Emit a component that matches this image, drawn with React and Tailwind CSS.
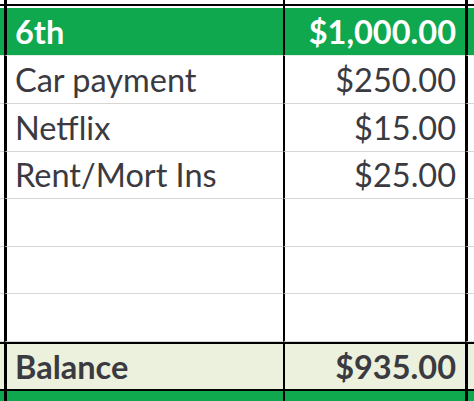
const rows = [
  { label: 'Car payment', amount: '$250.00', h: 'h-[48px]' },
  { label: 'Netflix', amount: '$15.00', h: 'h-[48px]' },
  { label: 'Rent/Mort Ins', amount: '$25.00', h: 'h-[47px]' },
  { label: '', amount: '', h: 'h-[48px]' },
  { label: '', amount: '', h: 'h-[47px]' },
  { label: '', amount: '', h: 'h-[48px]' },
];

// one spreadsheet row: gutter | col A | col B | gutter, black borders between
function Row({ h, bg = 'bg-white', line = 'border-b border-[#d6d6d6]', children }) {
  const [a, b] = children || [];
  return (
    <div className={`flex ${h} ${bg}`}>
      <div className={`w-[4px] shrink-0 ${line}`} />
      <div className={`w-[279px] shrink-0 border-l-[3px] border-l-black ${line} flex items-center pl-[8px] pt-[1px]`}>{a}</div>
      <div className={`w-[182px] shrink-0 border-l-[2px] border-l-black ${line} flex items-center justify-end pr-[9px] pt-[1px]`}>{b}</div>
      <div className={`flex-1 border-l-[3px] border-l-black ${line}`} />
    </div>
  );
}

export default function App() {
  return (
    <div className="w-[474px] h-[401px] overflow-hidden bg-white text-[32.5px] text-[#3a3a40] leading-none" style={{ fontFamily: 'Lato, "Open Sans", sans-serif' }}>
      <Row h="h-[4px]" line="" />
      <div className="h-[2px] bg-black" />
      <Row h="h-[2px]" line="" />

      <Row h="h-[48px]" bg="bg-[#0fa84f]" line="border-b border-[#e6efe6]">
        <span className="font-bold text-white">6th</span>
        <span className="font-bold text-white">$1,000.00</span>
      </Row>

      {rows.map((r, i) => (
        <Row key={i} h={r.h}>
          <span>{r.label}</span>
          <span>{r.amount}</span>
        </Row>
      ))}

      <div className="h-[2px] bg-black" />
      <Row h="h-[45px]" bg="bg-[#ebf1dd]" line="">
        <span className="font-bold">Balance</span>
        <span className="font-bold">$935.00</span>
      </Row>
      <div className="h-[2px] bg-black" />
      <Row h="h-[12px]" bg="bg-[#0fa84f]" line="" />
    </div>
  );
}
